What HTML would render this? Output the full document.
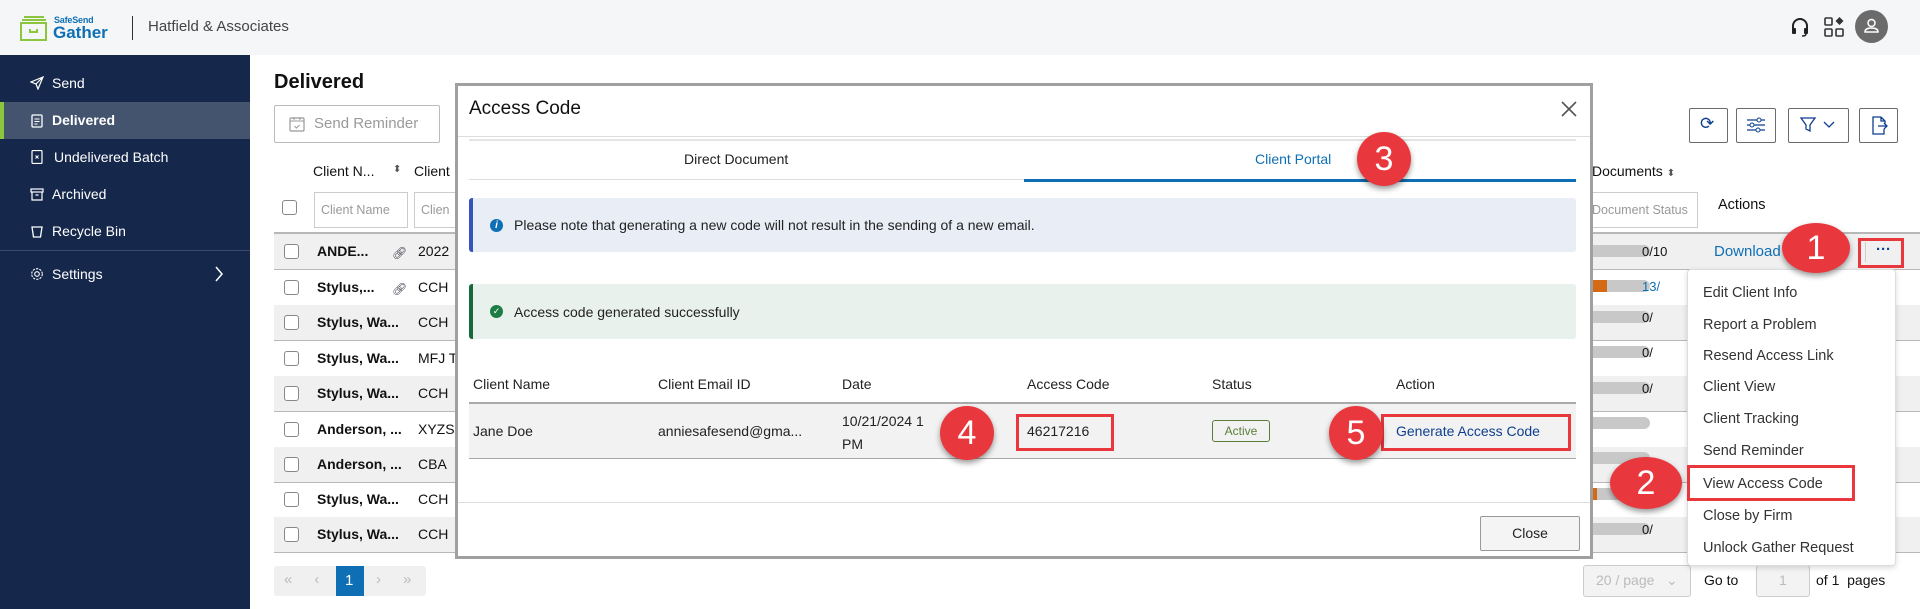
<!DOCTYPE html>
<html><head><meta charset="utf-8">
<style>
*{box-sizing:border-box;margin:0;padding:0}
body{width:1920px;height:609px;overflow:hidden;font-family:"Liberation Sans",sans-serif;background:#fff;position:relative;color:#212529}
.a{position:absolute}
.hdr{left:0;top:0;width:1920px;height:55px;background:#f5f6f8}
.side{left:0;top:55px;width:250px;height:554px;background:#15284b}
.si{position:absolute;left:52px;color:#fff;font-size:14px}
.sic{position:absolute;left:30px;width:14px;height:14px}
.row{position:absolute;left:274px;width:1650px;height:36px;border-bottom:1.5px solid #b8b8b8}
.g{background:#f0f0f0}
.cb{position:absolute;left:284px;width:15px;height:15px;border:1.3px solid #888;border-radius:3px;background:#fff}
.nm{position:absolute;left:317px;font-weight:bold;font-size:14px;color:#111}
.c3{position:absolute;left:418px;font-size:14px;color:#111}
.pb{position:absolute;left:1592px;width:60px;height:12px;background:#c8c8c8;border-radius:0 6px 6px 0}
.frac{position:absolute;left:1642px;font-size:13px;color:#111}
.btn{position:absolute;border:1px solid #6b6b6b;border-radius:2px;background:#fff}
.mi{position:absolute;left:1703px;font-size:14.5px;color:#333}
.circ{position:absolute;width:54px;height:54px;border-radius:50%;background:#e8383d;color:#fff;font-size:34px;text-align:center;line-height:54px;box-shadow:0 3px 6px rgba(0,0,0,.4)}
.rb{position:absolute;border:3px solid #e8383d}
.th{position:absolute;top:376px;font-size:14px;color:#222}
</style></head><body>
<div class="a hdr"></div>
<svg class="a" style="left:20px;top:15px" width="28" height="27" viewBox="0 0 28 27"><rect x="4" y="1" width="20" height="2" fill="#8cc63f"/><rect x="2" y="4" width="24" height="2" fill="#8cc63f"/><rect x="1" y="8" width="25" height="17" fill="none" stroke="#8cc63f" stroke-width="2"/><path d="M10 14v3h7v-3" fill="none" stroke="#8cc63f" stroke-width="2"/></svg>
<div class="a" style="left:54px;top:15px;font-size:9px;font-weight:bold;color:#0e6fb5;letter-spacing:-.2px">SafeSend</div>
<div class="a" style="left:53px;top:23px;font-size:17px;font-weight:bold;color:#0e6fb5">Gather</div>
<div class="a" style="left:132px;top:16px;width:1px;height:24px;background:#333"></div>
<div class="a" style="left:148px;top:18px;font-size:15px;color:#444">Hatfield &amp; Associates</div>
<svg class="a" style="left:1790px;top:16px" width="20" height="22" viewBox="0 0 20 22"><path d="M3 13V10a7 7 0 0114 0v3" fill="none" stroke="#222" stroke-width="2"/><rect x="2" y="12" width="4" height="6" rx="1" fill="#222"/><rect x="14" y="12" width="4" height="6" rx="1" fill="#222"/><path d="M16 18q0 2-4 2" stroke="#222" fill="none" stroke-width="1.5"/></svg>
<svg class="a" style="left:1824px;top:16px" width="21" height="22" viewBox="0 0 21 22"><rect x="1" y="2" width="7" height="7" rx="1" fill="none" stroke="#333" stroke-width="1.6"/><rect x="1" y="13" width="7" height="7" rx="1" fill="none" stroke="#333" stroke-width="1.6"/><rect x="12" y="13" width="7" height="7" rx="1" fill="none" stroke="#333" stroke-width="1.6"/><path d="M15.5 1l4 4-4 4-4-4z" fill="#333"/></svg>
<div class="a" style="left:1855px;top:10px;width:33px;height:33px;border-radius:50%;background:#6b6b6b"></div>
<svg class="a" style="left:1863px;top:17px" width="17" height="18" viewBox="0 0 17 18"><circle cx="8.5" cy="6" r="3.5" fill="none" stroke="#fff" stroke-width="1.5"/><path d="M2 15q0-4 6.5-4t6.5 4z" fill="none" stroke="#fff" stroke-width="1.5"/></svg>

<div class="a side"></div>
<div class="a" style="left:0;top:102px;width:250px;height:37px;background:#44546f"></div>
<div class="a" style="left:0;top:102px;width:4px;height:37px;background:#8cc63f"></div>
<svg class="sic" style="top:76px" viewBox="0 0 14 14"><path d="M13 1L1 6l5 2 2 5z M6 8l7-7" fill="none" stroke="#fff" stroke-width="1.2"/></svg>
<div class="si" style="top:75px">Send</div>
<svg class="sic" style="top:114px" viewBox="0 0 14 14"><rect x="2" y="1" width="10" height="12" rx="1" fill="none" stroke="#fff" stroke-width="1.3"/><path d="M4.5 5h5M4.5 7.5h5M4.5 10h3" stroke="#fff"/></svg>
<div class="si" style="top:112px;font-weight:bold">Delivered</div>
<svg class="sic" style="top:150px" viewBox="0 0 14 14"><rect x="2" y="0.5" width="10" height="13" rx="1" fill="none" stroke="#fff" stroke-width="1.2"/><path d="M5.5 5.5l3 3M8.5 5.5l-3 3" stroke="#fff"/></svg>
<div class="si" style="top:149px;left:54px">Undelivered Batch</div>
<svg class="sic" style="top:187px" viewBox="0 0 14 14"><rect x="1" y="2" width="12" height="3" fill="none" stroke="#fff" stroke-width="1.2"/><path d="M2 5v8h10V5M5.5 8h3" fill="none" stroke="#fff" stroke-width="1.2"/></svg>
<div class="si" style="top:186px">Archived</div>
<svg class="sic" style="top:224px" viewBox="0 0 14 14"><path d="M2 3h10l-1.5 10h-7z" fill="none" stroke="#fff" stroke-width="1.3"/></svg>
<div class="si" style="top:223px">Recycle Bin</div>
<div class="a" style="left:0;top:250px;width:250px;height:1px;background:#3b4b6b"></div>
<svg class="sic" style="top:267px" viewBox="0 0 14 14"><circle cx="7" cy="7" r="2.3" fill="none" stroke="#fff" stroke-width="1.1"/><circle cx="7" cy="7" r="5.3" fill="none" stroke="#fff" stroke-width="1.1" stroke-dasharray="2.2 1.2"/></svg>
<div class="si" style="top:266px">Settings</div>
<svg class="a" style="left:214px;top:266px" width="10" height="16" viewBox="0 0 10 16"><path d="M2 1l6 7-6 7" fill="none" stroke="#fff" stroke-width="1.5"/></svg>

<div class="a" style="left:274px;top:71px;font-size:20px;font-weight:bold;color:#111">Delivered</div>
<div class="btn" style="left:274px;top:105px;width:166px;height:38px;border-color:#bbb"></div>
<svg class="a" style="left:289px;top:116px" width="16" height="16" viewBox="0 0 16 16"><rect x="1" y="2" width="14" height="13" rx="1" fill="none" stroke="#999" stroke-width="1.2"/><path d="M1 5h14M5 1v3M11 1v3M5.5 10l2 2 3-3" fill="none" stroke="#999"/></svg>
<div class="a" style="left:314px;top:115px;font-size:15px;color:#9a9a9a">Send Reminder</div>
<div class="a" style="left:313px;top:163px;font-size:14px;color:#111">Client N...</div>
<div class="a" style="left:393px;top:164px;font-size:10px;color:#555">⬍</div>
<div class="a" style="left:414px;top:163px;font-size:14px;color:#111">Client</div>
<div class="cb" style="left:282px;top:200px"></div>
<div class="a" style="left:314px;top:192px;width:94px;height:36px;border:1px solid #ccc"></div>
<div class="a" style="left:321px;top:203px;font-size:12.5px;color:#999">Client Name</div>
<div class="a" style="left:414px;top:192px;width:50px;height:36px;border:1px solid #ccc"></div>
<div class="a" style="left:421px;top:203px;font-size:12.5px;color:#999">Clien</div>
<div class="a" style="left:274px;top:232px;width:1650px;height:2px;background:#b8b8b8"></div>

<div class="row g" style="top:234px"></div>
<div class="row" style="top:270px"></div>
<div class="row g" style="top:305px"></div>
<div class="row" style="top:341px"></div>
<div class="row g" style="top:376px"></div>
<div class="row" style="top:412px"></div>
<div class="row g" style="top:447px"></div>
<div class="row" style="top:482px"></div>
<div class="row g" style="top:517px"></div>

<div class="cb" style="top:244px"></div><div class="nm" style="top:243px">ANDE...</div><div class="c3" style="top:243px">2022</div>
<div class="cb" style="top:280px"></div><div class="nm" style="top:279px">Stylus,...</div><div class="c3" style="top:279px">CCH</div>
<div class="a" style="left:392px;top:246px;font-size:12px;color:#445">🔗︎</div>
<div class="a" style="left:392px;top:282px;font-size:12px;color:#445">🔗︎</div>
<div class="cb" style="top:315px"></div><div class="nm" style="top:314px">Stylus, Wa...</div><div class="c3" style="top:314px">CCH</div>
<div class="cb" style="top:351px"></div><div class="nm" style="top:350px">Stylus, Wa...</div><div class="c3" style="top:350px">MFJ T</div>
<div class="cb" style="top:386px"></div><div class="nm" style="top:385px">Stylus, Wa...</div><div class="c3" style="top:385px">CCH</div>
<div class="cb" style="top:422px"></div><div class="nm" style="top:421px">Anderson, ...</div><div class="c3" style="top:421px">XYZS</div>
<div class="cb" style="top:457px"></div><div class="nm" style="top:456px">Anderson, ...</div><div class="c3" style="top:456px">CBA</div>
<div class="cb" style="top:492px"></div><div class="nm" style="top:491px">Stylus, Wa...</div><div class="c3" style="top:491px">CCH</div>
<div class="cb" style="top:527px"></div><div class="nm" style="top:526px">Stylus, Wa...</div><div class="c3" style="top:526px">CCH</div>

<div class="a" style="left:1592px;top:163px;font-size:14px;color:#111">Documents <span style="font-size:10px;color:#555">⬍</span></div>
<div class="a" style="left:1592px;top:192px;width:106px;height:36px;border:1px solid #ccc;border-left:none"></div>
<div class="a" style="left:1592px;top:203px;font-size:12.5px;color:#999">Document Status</div>
<div class="a" style="left:1718px;top:197px;font-size:14.5px;color:#111">Actions</div>
<div class="pb" style="top:245px;width:58px"></div><div class="frac" style="top:244px">0/10</div>
<div class="a" style="left:1714px;top:243px;font-size:15px;color:#0e6fb5">Download</div>
<div class="a" style="left:1865px;top:242px;width:1px;height:20px;background:#ccc"></div>
<div class="a" style="left:1876px;top:245px;font-size:15px;line-height:10px;color:#0e3f8f;font-weight:bold">···</div>
<div class="pb" style="top:280px;width:58px"></div><div class="a" style="left:1592px;top:280px;width:15px;height:12px;background:#d46a15"></div><div class="frac" style="top:279px;color:#0e6fb5">13/</div>
<div class="pb" style="top:311px;width:58px"></div><div class="frac" style="top:310px">0/</div>
<div class="pb" style="top:346px;width:58px"></div><div class="frac" style="top:345px">0/</div>
<div class="pb" style="top:382px;width:58px"></div><div class="frac" style="top:381px">0/</div>
<div class="pb" style="top:417px;width:58px"></div>
<div class="pb" style="top:452px;width:58px"></div>
<div class="pb" style="top:488px;width:58px"></div><div class="a" style="left:1592px;top:488px;width:5px;height:12px;background:#d46a15"></div><div class="frac" style="top:487px">8/</div>
<div class="pb" style="top:523px;width:58px"></div><div class="frac" style="top:522px">0/</div>

<div class="btn" style="left:1689px;top:108px;width:39px;height:35px"></div>
<div class="a" style="left:1700px;top:114px;font-size:17px;color:#0e3f8f">⟳</div>
<div class="btn" style="left:1736px;top:108px;width:40px;height:35px"></div>
<svg class="a" style="left:1746px;top:117px" width="20" height="16" viewBox="0 0 20 16"><path d="M1 3h18M1 8h18M1 13h18" stroke="#0e3f8f" stroke-width="1.2"/><circle cx="13" cy="3" r="2" fill="#fff" stroke="#0e3f8f"/><circle cx="6" cy="8" r="2" fill="#fff" stroke="#0e3f8f"/><circle cx="12" cy="13" r="2" fill="#fff" stroke="#0e3f8f"/></svg>
<div class="btn" style="left:1788px;top:108px;width:61px;height:35px"></div>
<svg class="a" style="left:1800px;top:116px" width="40" height="18" viewBox="0 0 40 18"><path d="M1 2h14l-5 7v6l-4-2V9z" fill="none" stroke="#0e3f8f" stroke-width="1.3"/><path d="M24 6l5 5 5-5" fill="none" stroke="#0e3f8f" stroke-width="1.3"/></svg>
<div class="btn" style="left:1859px;top:108px;width:39px;height:35px"></div>
<svg class="a" style="left:1870px;top:116px" width="18" height="19" viewBox="0 0 18 19"><path d="M11 1H3v17h11v-5M11 1l4 4v3M11 1v4h4M8 10h9M14 7l3 3-3 3" fill="none" stroke="#0e3f8f" stroke-width="1.3"/></svg>

<div class="a" style="left:274px;top:566px;width:152px;height:30px;background:#f0f0f0;border-radius:3px"></div>
<div class="a" style="left:336px;top:566px;width:28px;height:30px;background:#0e6fb5"></div>
<div class="a" style="left:284px;top:571px;font-size:15px;color:#bbb;letter-spacing:22px">«‹</div>
<div class="a" style="left:345px;top:572px;font-size:15px;color:#fff">1</div>
<div class="a" style="left:376px;top:571px;font-size:15px;color:#bbb;letter-spacing:22px">›»</div>
<div class="a" style="left:1583px;top:565px;width:108px;height:32px;border:1px solid #ccc;background:#f3f3f3;border-radius:3px"></div>
<div class="a" style="left:1596px;top:572px;font-size:14px;color:#bbb">20 / page&nbsp;&nbsp;&nbsp;⌄</div>
<div class="a" style="left:1704px;top:572px;font-size:14px;color:#111">Go to</div>
<div class="a" style="left:1756px;top:565px;width:54px;height:32px;border:1px solid #ccc;background:#f3f3f3;border-radius:3px"></div>
<div class="a" style="left:1779px;top:572px;font-size:14px;color:#bbb">1</div>
<div class="a" style="left:1816px;top:572px;font-size:14px;color:#111">of 1&nbsp; pages</div>

<div class="a" style="left:1687px;top:269px;width:209px;height:297px;background:#fff;border:1px solid #ddd;border-radius:4px;box-shadow:0 2px 6px rgba(0,0,0,.15)"></div>
<div class="mi" style="top:285px">Edit Client Info</div>
<div class="mi" style="top:317px">Report a Problem</div>
<div class="mi" style="top:348px">Resend Access Link</div>
<div class="mi" style="top:379px">Client View</div>
<div class="mi" style="top:411px">Client Tracking</div>
<div class="mi" style="top:443px">Send Reminder</div>
<div class="mi" style="top:476px">View Access Code</div>
<div class="mi" style="top:508px">Close by Firm</div>
<div class="mi" style="top:540px">Unlock Gather Request</div>

<div class="a" style="left:455px;top:83px;width:1138px;height:476px;background:#fff;border:3px solid #a0a0a0"></div>
<div class="a" style="left:469px;top:98px;font-size:19px;color:#111">Access Code</div>
<svg class="a" style="left:1560px;top:100px" width="18" height="18" viewBox="0 0 18 18"><path d="M2 2l14 14M16 2L2 16" stroke="#555" stroke-width="1.6"/></svg>
<div class="a" style="left:458px;top:136px;width:1132px;height:1px;background:#ddd"></div>
<div class="a" style="left:469px;top:139px;width:1107px;height:2px;background:#e4e4e4"></div>
<div class="a" style="left:469px;top:179px;width:1107px;height:1px;background:#ddd"></div>
<div class="a" style="left:1024px;top:179px;width:552px;height:3px;background:#0e6fb5"></div>
<div class="a" style="left:684px;top:151px;font-size:14px;color:#222">Direct Document</div>
<div class="a" style="left:1255px;top:151px;font-size:14px;color:#0e6fb5">Client Portal</div>
<div class="a" style="left:469px;top:198px;width:1107px;height:54px;background:#e9edf6;border-left:4px solid #3355bb;border-radius:3px"></div>
<div class="a" style="left:490px;top:219px;width:13px;height:13px;border-radius:50%;background:#0e6fb5;color:#fff;font-size:10px;font-weight:bold;font-style:italic;text-align:center;line-height:13px">i</div>
<div class="a" style="left:514px;top:217px;font-size:14px;color:#222">Please note that generating a new code will not result in the sending of a new email.</div>
<div class="a" style="left:469px;top:284px;width:1107px;height:55px;background:#e8f1ec;border-left:4px solid #17683a;border-radius:3px"></div>
<div class="a" style="left:490px;top:305px;width:13px;height:13px;border-radius:50%;background:#1e7d45;color:#fff;font-size:9px;text-align:center;line-height:13px">✓</div>
<div class="a" style="left:514px;top:304px;font-size:14px;color:#222">Access code generated successfully</div>
<div class="th" style="left:473px">Client Name</div>
<div class="th" style="left:658px">Client Email ID</div>
<div class="th" style="left:842px">Date</div>
<div class="th" style="left:1027px">Access Code</div>
<div class="th" style="left:1212px">Status</div>
<div class="th" style="left:1396px">Action</div>
<div class="a" style="left:469px;top:402px;width:1107px;height:57px;background:#f2f2f2;border-top:2px solid #aaa;border-bottom:1.5px solid #aaa"></div>
<div class="a" style="left:473px;top:423px;font-size:14px;color:#222">Jane Doe</div>
<div class="a" style="left:658px;top:423px;font-size:14px;color:#222">anniesafesend@gma...</div>
<div class="a" style="left:842px;top:410px;font-size:14px;color:#222;line-height:23px">10/21/2024 1<br>PM</div>
<div class="a" style="left:1027px;top:423px;font-size:14px;color:#222">46217216</div>
<div class="a" style="left:1212px;top:420px;width:58px;height:22px;border:1px solid #5b7d3a;border-radius:3px;font-size:12px;color:#5b7d3a;text-align:center;line-height:20px">Active</div>
<div class="a" style="left:1396px;top:423px;font-size:14px;color:#0e3f8f">Generate Access Code</div>
<div class="a" style="left:458px;top:502px;width:1132px;height:1px;background:#ddd"></div>
<div class="a" style="left:1480px;top:516px;width:100px;height:35px;border:1px solid #999;background:#f4f4f4;border-radius:2px;font-size:14px;text-align:center;line-height:33px;color:#222">Close</div>

<div class="rb" style="left:1016px;top:414px;width:98px;height:37px"></div>
<div class="rb" style="left:1381px;top:414px;width:190px;height:37px"></div>
<div class="rb" style="left:1858px;top:238px;width:46px;height:30px"></div>
<div class="rb" style="left:1687px;top:465px;width:168px;height:36px"></div>
<div class="circ" style="left:1357px;top:132px">3</div>
<div class="circ" style="left:940px;top:406px">4</div>
<div class="circ" style="left:1329px;top:406px">5</div>
<div class="circ" style="left:1782px;top:223px;width:68px;height:50px;line-height:50px">1</div>
<div class="circ" style="left:1610px;top:457px;width:72px;height:52px;line-height:52px">2</div>
</body></html>
